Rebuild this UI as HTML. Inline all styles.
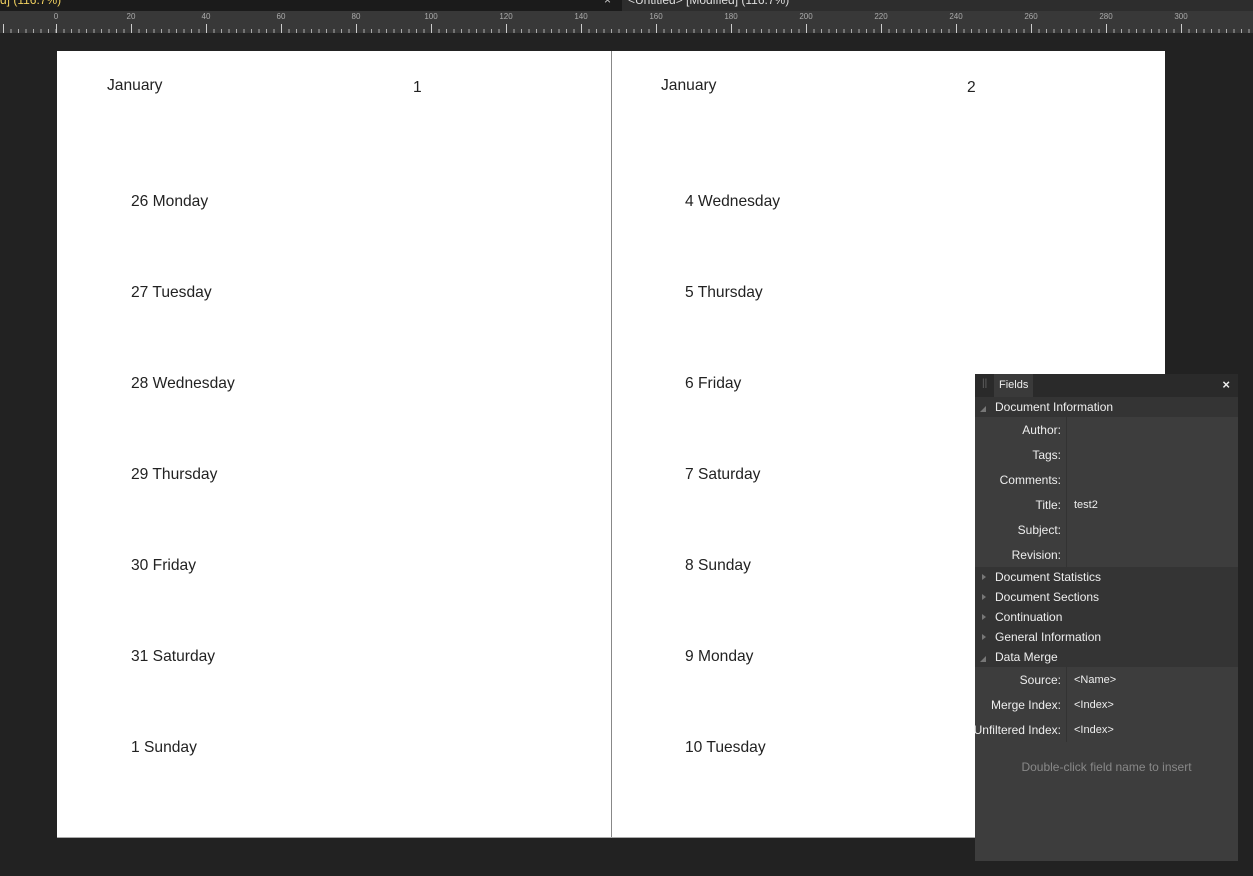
<!DOCTYPE html>
<html><head><meta charset="utf-8"><style>
body{margin:0;width:1253px;height:876px;background:#222;position:relative;overflow:hidden;font-family:"Liberation Sans",sans-serif}
.tabs{position:absolute;left:0;top:0;width:1253px;height:11px;background:#1b1b1b;overflow:hidden}
.tab2{position:absolute;left:622px;top:0;width:631px;height:11px;background:#2d2d2d}
.ttxt{position:absolute;top:-7px;font-size:12px;color:#f0d060;white-space:nowrap}
.ruler{position:absolute;left:0;top:11px;width:1253px;height:22px;background:#383838}
.ticks{position:absolute;left:0;bottom:0;width:1253px;height:4px;background:repeating-linear-gradient(90deg,#aaa 0 1px,transparent 1px 7.5px);background-position:56px 0}
.big{position:absolute;left:0;bottom:0;width:1253px;height:9px;background:repeating-linear-gradient(90deg,#ccc 0 1px,transparent 1px 75px);background-position:56px 0}
.rl{position:absolute;top:1px;font-size:8px;color:#aaa;transform:translateX(-50%)}
.page{position:absolute;top:51px;height:786px;background:#fff}
.t{position:absolute;font-size:15.6px;color:#222;white-space:nowrap}
.panel{position:absolute;left:975px;top:374px;width:263px;height:487px;background:#3d3d3d;font-size:12px;color:#eee}
.ph{height:23px;background:#2a2a2a;position:relative}
.sec{height:20px;background:#343434;position:relative;line-height:20px;padding-left:20px}
.sec:before{content:"";position:absolute;left:7px;top:7px;border:3px solid transparent;border-left:4px solid #777}
.sec.open:before{border:3px solid transparent;border-right-color:#777;border-bottom-color:#777;left:5px;top:9px}
.row{height:25px;line-height:27px;position:relative}
.row .k{position:absolute;right:177px;white-space:nowrap}
.row .v{position:absolute;left:99px;font-size:11px}
.grp{position:relative}
.grp:after{content:"";position:absolute;left:91px;top:0;bottom:0;width:1px;background:#333}
</style></head><body>
<div class="tabs"><span class="ttxt" style="left:0">d] (116.7%)</span><span class="ttxt" style="left:604px;color:#ccc">×</span><div class="tab2"><span class="ttxt" style="left:6px;color:#ddd">&lt;Untitled&gt; [Modified] (116.7%)</span></div></div>
<div class="ruler"><div class="ticks"></div><div class="big"></div>
<span class="rl" style="left:56px">0</span><span class="rl" style="left:131px">20</span><span class="rl" style="left:206px">40</span><span class="rl" style="left:281px">60</span><span class="rl" style="left:356px">80</span><span class="rl" style="left:431px">100</span><span class="rl" style="left:506px">120</span><span class="rl" style="left:581px">140</span><span class="rl" style="left:656px">160</span><span class="rl" style="left:731px">180</span><span class="rl" style="left:806px">200</span><span class="rl" style="left:881px">220</span><span class="rl" style="left:956px">240</span><span class="rl" style="left:1031px">260</span><span class="rl" style="left:1106px">280</span><span class="rl" style="left:1181px">300</span>
</div>
<div class="page" style="left:57px;width:554px"></div>
<div style="position:absolute;left:611px;top:51px;width:1px;height:786px;background:#888"></div>
<div class="page" style="left:612px;width:553px"></div>
<div style="position:absolute;left:57px;top:837px;width:1108px;height:1px;background:#aaa"></div>
<div class="t" style="left:107px;top:77px">January</div><div class="t" style="left:413px;top:79px">1</div>
<div class="t" style="left:661px;top:77px">January</div><div class="t" style="left:967px;top:79px">2</div>
<div class="t" style="left:131px;top:193px">26 Monday</div>
<div class="t" style="left:131px;top:284px">27 Tuesday</div>
<div class="t" style="left:131px;top:375px">28 Wednesday</div>
<div class="t" style="left:131px;top:466px">29 Thursday</div>
<div class="t" style="left:131px;top:557px">30 Friday</div>
<div class="t" style="left:131px;top:648px">31 Saturday</div>
<div class="t" style="left:131px;top:739px">1 Sunday</div>
<div class="t" style="left:685px;top:193px">4 Wednesday</div>
<div class="t" style="left:685px;top:284px">5 Thursday</div>
<div class="t" style="left:685px;top:375px">6 Friday</div>
<div class="t" style="left:685px;top:466px">7 Saturday</div>
<div class="t" style="left:685px;top:557px">8 Sunday</div>
<div class="t" style="left:685px;top:648px">9 Monday</div>
<div class="t" style="left:685px;top:739px">10 Tuesday</div>
<div class="panel">
<div class="ph"><span style="position:absolute;left:7px;top:4px;color:#666;font-size:10px">||</span><span style="position:absolute;left:19px;top:0;height:23px;line-height:23px;background:#3a3a3a;padding:0 5px;font-size:11px">Fields</span><span style="position:absolute;right:8px;top:3px;font-size:13px;font-weight:bold">×</span></div>
<div class="sec open">Document Information</div>
<div class="grp">
<div class="row"><span class="k">Author:</span></div>
<div class="row"><span class="k">Tags:</span></div>
<div class="row"><span class="k">Comments:</span></div>
<div class="row"><span class="k">Title:</span><span class="v">test2</span></div>
<div class="row"><span class="k">Subject:</span></div>
<div class="row"><span class="k">Revision:</span></div>
</div>
<div class="sec">Document Statistics</div>
<div class="sec">Document Sections</div>
<div class="sec">Continuation</div>
<div class="sec">General Information</div>
<div class="sec open">Data Merge</div>
<div class="grp">
<div class="row"><span class="k">Source:</span><span class="v">&lt;Name&gt;</span></div>
<div class="row"><span class="k">Merge Index:</span><span class="v">&lt;Index&gt;</span></div>
<div class="row"><span class="k">Unfiltered Index:</span><span class="v">&lt;Index&gt;</span></div>
</div>
<div style="text-align:center;color:#888;margin-top:18px">Double-click field name to insert</div>
</div>
</body></html>
